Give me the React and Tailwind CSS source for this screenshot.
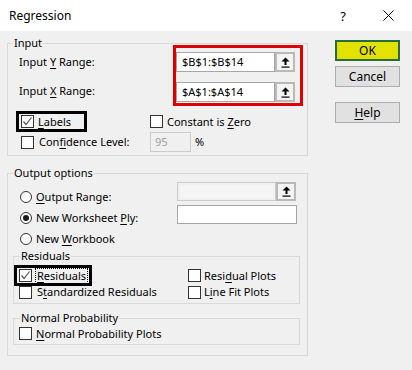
import React from 'react';

const U = ({ children }) => <span className="underline underline-offset-[2px]">{children}</span>;

const Checkbox = ({ checked }) => (
  <span className="flex h-[13px] w-[13px] shrink-0 items-center justify-center border border-[#333333] bg-white">
    {checked && (
      <svg width="11" height="11" viewBox="0 0 11 11">
        <polyline points="1.5,5.5 4,8.5 9.5,1.5" fill="none" stroke="#555555" strokeWidth="1.2" />
      </svg>
    )}
  </span>
);

const Radio = ({ checked }) => (
  <span className="flex h-[12px] w-[12px] shrink-0 items-center justify-center rounded-full border border-[#333333] bg-white">
    {checked && <span className="h-[6px] w-[6px] rounded-full bg-[#1a1a1a]" />}
  </span>
);

const PickButton = () => (
  <span className="flex h-full w-[20px] shrink-0 items-center justify-center border-2 border-[#b9b9b9] bg-[#f4f4f4]">
    <svg width="9" height="11" viewBox="0 0 9 11">
      <polygon points="4.5,0.5 0.5,4.5 8.5,4.5" fill="#000" />
      <rect x="3.5" y="4" width="2" height="4" fill="#000" />
      <rect x="0.5" y="9.5" width="8" height="1.2" fill="#000" />
    </svg>
  </span>
);

const RangeField = ({ value }) => (
  <div className="flex h-[20px] w-[119px]">
    <div className="flex flex-1 items-center border border-[#a6a6a6] bg-white pl-[5px]">{value}</div>
    <PickButton />
  </div>
);

const App = () => {
  return (
    <div className="h-[370px] w-[412px] overflow-hidden bg-[#f0f0f0] font-['Noto_Sans',sans-serif] text-[11px] leading-[16px] text-black">
      {/* title bar */}
      <div className="flex h-[31px] items-center bg-white pl-[9px] pr-[18px]">
        <span className="text-[12px]">Regression</span>
        <span className="ml-auto text-[13px]">?</span>
        <svg className="ml-[37px]" width="11" height="11" viewBox="0 0 11 11">
          <path d="M0.5 0.5 L10.5 10.5 M10.5 0.5 L0.5 10.5" stroke="#000" strokeWidth="1" />
        </svg>
      </div>

      <div className="flex pl-[7px]">
        <div className="w-[301px] pt-[4px]">
          {/* Input */}
          <fieldset className="min-w-0 border border-[#d9d9d9]">
            <legend className="ml-[5px] px-[1px]">Input</legend>
            <div className="pl-[11px] pb-[3px]">
              <div className="-mt-[6px] flex">
                <div className="flex w-[154px] flex-col gap-[9px] pt-[7px]">
                  <div className="flex h-[20px] items-center">
                    Input&nbsp;<U>Y</U>&nbsp;Range:
                  </div>
                  <div className="flex h-[20px] items-center">
                    Input&nbsp;<U>X</U>&nbsp;Range:
                  </div>
                </div>
                <div className="flex flex-col gap-[10px] border-[3px] border-[#e00000] pt-[4px] pb-[1px] pr-[5px]">
                  <RangeField value="$B$1:$B$14" />
                  <RangeField value="$A$1:$A$14" />
                </div>
              </div>

              <div className="mt-[5px] flex h-[21px] items-center">
                <div className="w-[131px]">
                  <div className="-ml-[3px] flex h-[21px] w-[71px] items-center border-[3px] border-black pl-[2px]">
                    <Checkbox checked />
                    <span className="ml-[4px]">
                      <U>L</U>abels
                    </span>
                  </div>
                </div>
                <Checkbox />
                <span className="ml-[4px]">
                  Constant is <U>Z</U>ero
                </span>
              </div>

              <div className="flex h-[20px] items-center">
                <div className="flex w-[131px] items-center pl-[2px]">
                  <Checkbox />
                  <span className="ml-[5px]">
                    Con<U>f</U>idence Level:
                  </span>
                </div>
                <div className="flex h-[20px] w-[41px] items-center border border-[#cccccc] bg-[#f0f0f0] pl-[4px] text-[#a0a0a0]">
                  95
                </div>
                <span className="ml-[4px]">%</span>
              </div>
            </div>
          </fieldset>

          {/* Output options */}
          <fieldset className="mt-[9px] min-w-0 border border-[#d9d9d9]">
            <legend className="ml-[5px] px-[1px]">Output options</legend>
            <div className="pl-[5px] pr-[7px] pb-[10px]">
              <div className="flex">
                <div className="w-[164px] pl-[7px] pt-[5px]">
                  <div className="flex h-[21px] items-center">
                    <Radio />
                    <span className="ml-[4px]">
                      <U>O</U>utput Range:
                    </span>
                  </div>
                  <div className="flex h-[21px] items-center">
                    <Radio checked />
                    <span className="ml-[4px]">
                      New Worksheet <U>P</U>ly:
                    </span>
                  </div>
                  <div className="flex h-[21px] items-center">
                    <Radio />
                    <span className="ml-[4px]">
                      New <U>W</U>orkbook
                    </span>
                  </div>
                </div>
                <div className="pt-[1px]">
                  <div className="flex h-[19px] w-[119px]">
                    <div className="flex flex-1 items-center border border-[#cccccc] bg-[#f0f0f0] p-[2px]">
                      <div className="h-full w-full bg-[#f5f5f5]" />
                    </div>
                    <PickButton />
                  </div>
                  <div className="mt-[4px] h-[19px] w-[120px] border border-[#a6a6a6] bg-white" />
                </div>
              </div>

              {/* Residuals */}
              <fieldset className="-mt-[1px] min-w-0 border border-[#d9d9d9]">
                <legend className="ml-[6px] px-[1px]">Residuals</legend>
                <div className="pl-[5px] pb-[4px]">
                  <div className="mt-[1px] flex h-[21px] items-center">
                    <div className="w-[169px]">
                      <div className="-ml-[5px] flex h-[21px] w-[78px] items-center border-[3px] border-black pl-[2px]">
                        <Checkbox checked />
                        <span className="ml-[3px] border border-dotted border-black px-[1px] leading-[14px]">
                          <U>R</U>esiduals
                        </span>
                      </div>
                    </div>
                    <Checkbox />
                    <span className="ml-[3px]">
                      Resi<U>d</U>ual Plots
                    </span>
                  </div>
                  <div className="-mt-[1px] flex h-[14px] items-center">
                    <div className="flex w-[169px] items-center">
                      <Checkbox />
                      <span className="ml-[5px]">
                        S<U>t</U>andardized Residuals
                      </span>
                    </div>
                    <Checkbox />
                    <span className="ml-[3px]">
                      L<U>i</U>ne Fit Plots
                    </span>
                  </div>
                </div>
              </fieldset>

              {/* Normal Probability */}
              <fieldset className="mt-[6px] min-w-0 border border-[#d9d9d9]">
                <legend className="ml-[6px] px-[1px]">Normal Probability</legend>
                <div className="pl-[5px] pb-[3px]">
                  <div className="flex h-[15px] items-center">
                    <Checkbox />
                    <span className="ml-[4px]">
                      <U>N</U>ormal Probability Plots
                    </span>
                  </div>
                </div>
              </fieldset>
            </div>
          </fieldset>
        </div>

        {/* buttons */}
        <div className="ml-[27px] flex w-[65px] flex-col pt-[9px]">
          <button className="flex h-[21px] items-center justify-center border-2 border-[#2a6b3a] bg-[#e2e200] text-[12px]">
            OK
          </button>
          <button className="mt-[5px] flex h-[21px] items-center justify-center border border-[#adadad] bg-[#e1e1e1] text-[12px]">
            Cancel
          </button>
          <button className="mt-[15px] flex h-[21px] items-center justify-center border border-[#adadad] bg-[#e1e1e1] text-[12px]">
            <U>H</U>elp
          </button>
        </div>
      </div>
    </div>
  );
};

export default App;
